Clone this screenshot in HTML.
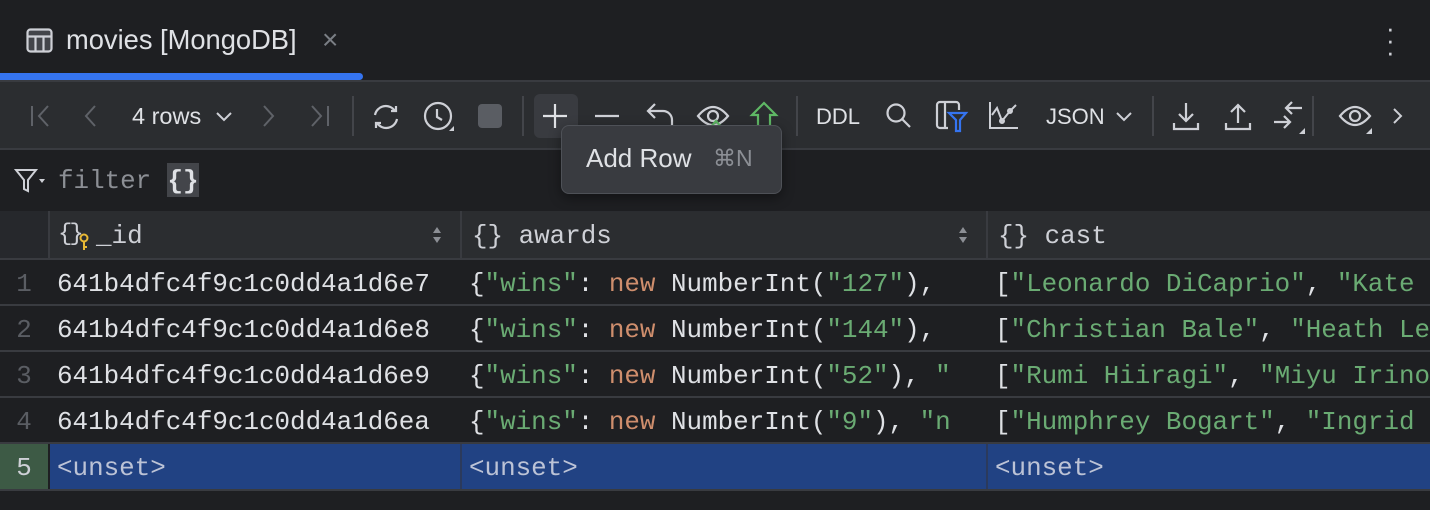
<!DOCTYPE html>
<html><head><meta charset="utf-8">
<style>
*{margin:0;padding:0;box-sizing:border-box}
body{width:1430px;height:510px;background:#1e1f22;overflow:hidden;position:relative;font-family:"Liberation Sans",sans-serif;color:#dfe1e5}
.a{position:absolute}
.mono{font-family:"Liberation Mono",monospace;font-size:25.9px;white-space:nowrap}
.g{color:#6aab73}.o{color:#cf8e6d}
.sep{position:absolute;top:96px;width:2px;height:40px;background:#43454a}
svg{position:absolute;overflow:visible}
.row{position:absolute;left:0;width:1430px;height:44px;background:#1e1f22}
.num{position:absolute;left:0;width:48px;height:44px;text-align:center;line-height:48px;color:#5a5d63}
.c{position:absolute;height:44px;line-height:48px;overflow:hidden}
</style></head><body>
<!-- tab bar -->
<svg style="left:26px;top:28px" width="28" height="26" viewBox="0 0 28 26"><rect x="1.5" y="1.5" width="24" height="22" rx="3" fill="#43454a" stroke="#ced0d6" stroke-width="2.2"/><path d="M1.5 8.5H25.5M9.5 8.5V23.5M17.5 8.5V23.5" stroke="#ced0d6" stroke-width="2.2"/></svg>
<div class="a" style="left:66px;top:24px;font-size:27.3px;color:#dfe1e5">movies [MongoDB]</div>
<div class="a" style="left:322px;top:24px;font-size:28px;color:#7a7e85">×</div>
<div class="a" style="left:1386px;top:22px;font-size:26px;color:#ced0d6;line-height:12px">·<br>·<br>·</div>
<div class="a" style="left:0;top:73px;width:363px;height:7px;background:#3574f0;border-radius:0 4px 4px 0"></div>
<div class="a" style="left:0;top:80px;width:1430px;height:2px;background:#393b40"></div>
<!-- toolbar -->
<div class="a" style="left:0;top:82px;width:1430px;height:66px;background:#2b2d30"></div>
<div class="a" style="left:0;top:148px;width:1430px;height:2px;background:#393b40"></div>
<svg style="left:30px;top:105px" width="22" height="22" stroke="#5f6268" stroke-width="2" fill="none"><path d="M2 1V21M18 1L9 11L18 21"/></svg>
<svg style="left:84px;top:105px" width="14" height="22" stroke="#5f6268" stroke-width="2" fill="none"><path d="M11 1L2 11L11 21"/></svg>
<div class="a" style="left:132px;top:103px;font-size:23.5px">4 rows</div>
<svg style="left:216px;top:111px" width="18" height="12" stroke="#ced0d6" stroke-width="2" fill="none"><path d="M1 2L8 9L15 2"/></svg>
<svg style="left:262px;top:105px" width="14" height="22" stroke="#5f6268" stroke-width="2" fill="none"><path d="M2 1L11 11L2 21"/></svg>
<svg style="left:310px;top:105px" width="22" height="22" stroke="#5f6268" stroke-width="2" fill="none"><path d="M2 1L11 11L2 21M18 1V21"/></svg>
<div class="sep" style="left:352px"></div>
<svg style="left:370px;top:102px" width="32" height="30" stroke="#ced0d6" stroke-width="2.2" fill="none"><path d="M5 13A11 11 0 0 1 25 9M27 17A11 11 0 0 1 7 21M21 9H26V4M11 21H6V26"/></svg>
<svg style="left:423px;top:101px" width="34" height="34" stroke="#ced0d6" stroke-width="2.2" fill="none"><circle cx="15" cy="15" r="13"/><path d="M14 8V16L19 19"/><path d="M26 30L31 30L31 25Z" fill="#ced0d6" stroke="none"/></svg>
<div class="a" style="left:478px;top:104px;width:24px;height:24px;background:#5a5d63;border-radius:4px"></div>
<div class="sep" style="left:522px"></div>
<div class="a" style="left:534px;top:94px;width:44px;height:44px;background:#393b40;border-radius:6px"></div>
<svg style="left:542px;top:103px" width="26" height="26" stroke="#dfe1e5" stroke-width="2.2"><path d="M13 1V25M1 13H25"/></svg>
<svg style="left:594px;top:103px" width="26" height="26" stroke="#ced0d6" stroke-width="2.2"><path d="M1 13H25"/></svg>
<svg style="left:646px;top:102px" width="30" height="28" stroke="#ced0d6" stroke-width="2.2" fill="none"><path d="M9 2L2 9L9 16M2 9H17A9 9 0 0 1 26 18V24"/></svg>
<svg style="left:696px;top:104px" width="34" height="24" stroke="#ced0d6" stroke-width="2.2" fill="none"><path d="M2 12Q17 -6 32 12Q17 30 2 12Z"/><circle cx="17" cy="12" r="5"/><path d="M14 24L20 17L26 24" stroke="#5fb865"/></svg>
<svg style="left:750px;top:101px" width="28" height="30" stroke="#5fb865" stroke-width="2.2" fill="none"><path d="M14 2L2 14H8V28H20V14H26Z"/></svg>
<div class="sep" style="left:796px"></div>
<div class="a" style="left:816px;top:104px;font-size:22px">DDL</div>
<svg style="left:886px;top:103px" width="26" height="26" stroke="#ced0d6" stroke-width="2.2" fill="none"><circle cx="10" cy="10" r="8.5"/><path d="M16 16L24 24"/></svg>
<svg style="left:936px;top:100px" width="32" height="34" fill="none"><path d="M12 28H4A3 3 0 0 1 1 25V5A3 3 0 0 1 4 2H20A3 3 0 0 1 23 5V10M9 2V28" stroke="#ced0d6" stroke-width="2.2"/><path d="M13 13H30L24 20V31H20V20Z" stroke="#3574f0" stroke-width="2.2"/></svg>
<svg style="left:988px;top:101px" width="32" height="30" stroke="#ced0d6" stroke-width="2" fill="none"><path d="M2 1V27H30"/><path d="M4 14L9 7L14 20L22 10L28 4"/><circle cx="14" cy="20" r="2"/><circle cx="22" cy="10" r="2"/></svg>
<div class="a" style="left:1046px;top:104px;font-size:22px">JSON</div>
<svg style="left:1116px;top:111px" width="18" height="12" stroke="#ced0d6" stroke-width="2" fill="none"><path d="M1 2L8 9L15 2"/></svg>
<div class="sep" style="left:1152px"></div>
<svg style="left:1172px;top:101px" width="28" height="30" stroke="#ced0d6" stroke-width="2.2" fill="none"><path d="M14 2V20M7 13L14 20L21 13M2 22V28H26V22"/></svg>
<svg style="left:1224px;top:101px" width="28" height="30" stroke="#ced0d6" stroke-width="2.2" fill="none"><path d="M14 22V4M7 11L14 4L21 11M2 22V28H26V22"/></svg>
<svg style="left:1272px;top:101px" width="36" height="34" stroke="#ced0d6" stroke-width="2.2" fill="none"><path d="M30 7H14M20 1L14 7L20 13M2 21H18M12 15L18 21L12 27"/><path d="M27 33L33 33L33 27Z" fill="#ced0d6" stroke="none"/></svg>
<div class="sep" style="left:1312px"></div>
<svg style="left:1338px;top:103px" width="36" height="32" stroke="#ced0d6" stroke-width="2.2" fill="none"><path d="M2 13Q17 -5 32 13Q17 31 2 13Z"/><circle cx="17" cy="13" r="5"/><path d="M28 31L34 31L34 25Z" fill="#ced0d6" stroke="none"/></svg>
<svg style="left:1392px;top:107px" width="12" height="20" stroke="#ced0d6" stroke-width="2" fill="none"><path d="M2 2L9 9L2 16"/></svg>
<!-- filter -->
<svg style="left:14px;top:168px" width="32" height="26" fill="none"><path d="M2 2H22L14 12V23L10 21V12Z" stroke="#ced0d6" stroke-width="2"/><path d="M25 11H31L28 15Z" fill="#ced0d6"/></svg>
<div class="a mono" style="left:58px;top:166px;color:#8c8f95">filter</div>
<div class="a mono" style="left:167px;top:163px;width:32px;height:34px;background:#43454a;line-height:36px;text-align:center;color:#dfe1e5;font-weight:bold">{}</div>
<!-- header -->
<div class="a" style="left:0;top:211px;width:1430px;height:47px;background:#2b2d30"></div>
<div class="a" style="left:0;top:211px;width:48px;height:47px;background:#26282c"></div>
<div class="a" style="left:48px;top:211px;width:2px;height:279px;background:#393b40"></div>
<div class="a" style="left:460px;top:211px;width:2px;height:279px;background:#393b40"></div>
<div class="a" style="left:986px;top:211px;width:2px;height:279px;background:#393b40"></div>
<div class="a mono" style="left:58px;top:221px;color:#ced0d6;font-size:24px;letter-spacing:-3px">{}</div>
<svg style="left:78px;top:233px" width="12" height="18" stroke="#e8b935" stroke-width="2" fill="none"><circle cx="6" cy="5" r="3.5"/><path d="M6 9V17M6 14H9"/></svg>
<div class="a mono" style="left:96px;top:221px;color:#ced0d6">_id</div>
<svg style="left:431px;top:226px" width="12" height="18" fill="#8c8f95"><path d="M6 1L10 7H2ZM6 17L10 11H2Z"/></svg>
<div class="a mono" style="left:472px;top:221px;color:#ced0d6">{} awards</div>
<svg style="left:957px;top:226px" width="12" height="18" fill="#8c8f95"><path d="M6 1L10 7H2ZM6 17L10 11H2Z"/></svg>
<div class="a mono" style="left:998px;top:221px;color:#ced0d6">{} cast</div>
<div class="a" style="left:0;top:258px;width:1430px;height:2px;background:#393b40"></div>
<!-- rows -->
<div class="row mono" style="top:260px"><div class="num">1</div><div class="c" style="left:57px">641b4dfc4f9c1c0dd4a1d6e7</div><div class="c" style="left:469px;width:490px">{<span class="g">"wins"</span>: <span class="o">new</span> NumberInt(<span class="g">"127"</span>),</div><div class="c" style="left:995px"><span>[</span><span class="g">"Leonardo DiCaprio"</span>, <span class="g">"Kate</span></div></div>
<div class="a" style="left:0;top:304px;width:1430px;height:2px;background:#393b40"></div>
<div class="row mono" style="top:306px"><div class="num">2</div><div class="c" style="left:57px">641b4dfc4f9c1c0dd4a1d6e8</div><div class="c" style="left:469px;width:490px">{<span class="g">"wins"</span>: <span class="o">new</span> NumberInt(<span class="g">"144"</span>),</div><div class="c" style="left:995px">[<span class="g">"Christian Bale"</span>, <span class="g">"Heath Le</span></div></div>
<div class="a" style="left:0;top:350px;width:1430px;height:2px;background:#393b40"></div>
<div class="row mono" style="top:352px"><div class="num">3</div><div class="c" style="left:57px">641b4dfc4f9c1c0dd4a1d6e9</div><div class="c" style="left:469px;width:490px">{<span class="g">"wins"</span>: <span class="o">new</span> NumberInt(<span class="g">"52"</span>), <span class="g">"</span></div><div class="c" style="left:995px">[<span class="g">"Rumi Hiiragi"</span>, <span class="g">"Miyu Irino</span></div></div>
<div class="a" style="left:0;top:396px;width:1430px;height:2px;background:#393b40"></div>
<div class="row mono" style="top:398px"><div class="num">4</div><div class="c" style="left:57px">641b4dfc4f9c1c0dd4a1d6ea</div><div class="c" style="left:469px;width:490px">{<span class="g">"wins"</span>: <span class="o">new</span> NumberInt(<span class="g">"9"</span>), <span class="g">"n</span></div><div class="c" style="left:995px">[<span class="g">"Humphrey Bogart"</span>, <span class="g">"Ingrid</span></div></div>
<div class="a" style="left:0;top:442px;width:1430px;height:2px;background:#393b40"></div>
<div class="row mono" style="top:444px;background:#214283;height:45px"><div class="num" style="background:#3d5a45;color:#ced0d6;height:45px">5</div><div class="c" style="left:57px;color:#bcc3d6">&lt;unset&gt;</div><div class="c" style="left:469px;color:#bcc3d6">&lt;unset&gt;</div><div class="c" style="left:995px;color:#bcc3d6">&lt;unset&gt;</div></div>
<div class="a" style="left:48px;top:444px;width:2px;height:45px;background:#1e1f22"></div>
<div class="a" style="left:460px;top:444px;width:2px;height:45px;background:#2b3a5c"></div>
<div class="a" style="left:986px;top:444px;width:2px;height:45px;background:#2b3a5c"></div>
<div class="a" style="left:0;top:489px;width:1430px;height:2px;background:#393b40"></div>
<!-- tooltip -->
<div class="a" style="left:561px;top:125px;width:221px;height:69px;background:#393b40;border:1px solid #4e5157;border-radius:8px;box-shadow:0 4px 12px rgba(0,0,0,.4)"></div>
<div class="a" style="left:586px;top:143px;font-size:26px;color:#dfe1e5">Add Row</div>
<div class="a" style="left:713px;top:145px;font-size:23px;color:#8c8f95">⌘N</div>
</body></html>
